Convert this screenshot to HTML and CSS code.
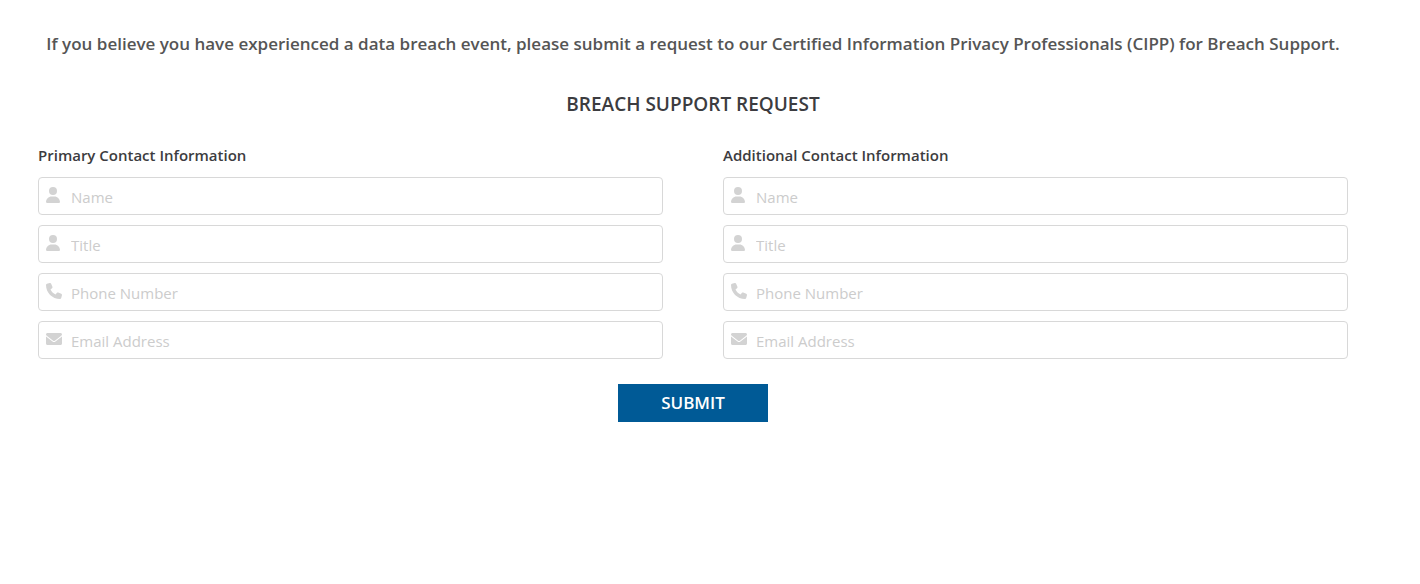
FILE: index.html
```
<!DOCTYPE html>
<html lang="en">
<head>
    <meta charset="UTF-8">
    <meta name="viewport" content="width=device-width, initial-scale=1.0">
    <title>Breach Support Request</title>
    <link rel="stylesheet" href="styles.css">
</head>
<body>

<svg class="icon-sprite" aria-hidden="true">
    <symbol id="icon-user" viewBox="0 0 448 512">
        <path d="M224 256A128 128 0 1 0 224 0a128 128 0 1 0 0 256zm-45.7 48C79.8 304 0 383.8 0 482.3C0 498.7 13.3 512 29.7 512H418.3c16.4 0 29.7-13.3 29.7-29.7C448 383.8 368.2 304 269.7 304H178.3z"/>
    </symbol>
    <symbol id="icon-phone" viewBox="0 0 512 512">
        <path d="M164.9 24.6c-7.7-18.6-28-28.5-47.4-23.2l-88 24C12.1 30.2 0 46 0 64C0 311.4 200.6 512 448 512c18 0 33.8-12.1 38.6-29.5l24-88c5.3-19.4-4.6-39.7-23.2-47.4l-96-40c-16.3-6.8-35.2-2.1-46.3 11.6L304.7 368C234.3 334.7 177.3 277.7 144 207.3L193.3 167c13.7-11.2 18.4-30 11.6-46.3l-40-96z"/>
    </symbol>
    <symbol id="icon-envelope" viewBox="0 0 512 512">
        <path d="M256 352c-16.53 0-33.06-5.422-47.16-16.41L0 173.2V400C0 426.5 21.49 448 48 448h416c26.51 0 48-21.49 48-48V173.2l-208.8 162.5C289.1 346.6 272.5 352 256 352zM16.29 145.3l212.2 165.1c16.19 12.6 38.87 12.6 55.06 0l212.2-165.1C505.1 137.3 512 125 512 112C512 85.49 490.5 64 464 64h-416C21.49 64 0 85.49 0 112C0 125 6.01 137.3 16.29 145.3z"/>
    </symbol>
</svg>

<main class="breach-support">
    <p class="intro">If you believe you have experienced a data breach event, please submit a request to our Certified Information Privacy Professionals (CIPP) for Breach Support.</p>

    <h1 class="form-title">BREACH SUPPORT REQUEST</h1>

    <form class="request-form">
        <div class="contact-columns">
            <section class="contact">
                <h2 class="contact-title">Primary Contact Information</h2>
                <label class="field">
                    <svg class="icon icon-user" aria-hidden="true"><use href="#icon-user"/></svg>
                    <input type="text" name="primary_name" placeholder="Name" aria-label="Name">
                </label>
                <label class="field">
                    <svg class="icon icon-user" aria-hidden="true"><use href="#icon-user"/></svg>
                    <input type="text" name="primary_title" placeholder="Title" aria-label="Title">
                </label>
                <label class="field">
                    <svg class="icon" aria-hidden="true"><use href="#icon-phone"/></svg>
                    <input type="tel" name="primary_phone" placeholder="Phone Number" aria-label="Phone Number">
                </label>
                <label class="field">
                    <svg class="icon" aria-hidden="true"><use href="#icon-envelope"/></svg>
                    <input type="email" name="primary_email" placeholder="Email Address" aria-label="Email Address">
                </label>
            </section>

            <section class="contact">
                <h2 class="contact-title">Additional Contact Information</h2>
                <label class="field">
                    <svg class="icon icon-user" aria-hidden="true"><use href="#icon-user"/></svg>
                    <input type="text" name="additional_name" placeholder="Name" aria-label="Name">
                </label>
                <label class="field">
                    <svg class="icon icon-user" aria-hidden="true"><use href="#icon-user"/></svg>
                    <input type="text" name="additional_title" placeholder="Title" aria-label="Title">
                </label>
                <label class="field">
                    <svg class="icon" aria-hidden="true"><use href="#icon-phone"/></svg>
                    <input type="tel" name="additional_phone" placeholder="Phone Number" aria-label="Phone Number">
                </label>
                <label class="field">
                    <svg class="icon" aria-hidden="true"><use href="#icon-envelope"/></svg>
                    <input type="email" name="additional_email" placeholder="Email Address" aria-label="Email Address">
                </label>
            </section>
        </div>

        <button class="submit-button" type="submit">SUBMIT</button>
    </form>
</main>

</body>
</html>
```
FILE: styles.css
```
* {
    box-sizing: border-box;
}

body {
    margin: 0;
    background-color: #fff;
    color: #3c3c40;
    font-family: "Segoe UI", "Open Sans", "Noto Sans", sans-serif;
}

.icon-sprite {
    display: none;
}

.breach-support {
    padding: 32px 72px 32px 38px;
}

.intro {
    margin: 0;
    color: #555;
    font-size: 17px;
    font-weight: 600;
    line-height: 24px;
    text-align: center;
}

.form-title {
    margin: 36px 0 0;
    font-size: 19px;
    font-weight: 600;
    line-height: 24px;
    text-align: center;
}

.request-form {
    display: flex;
    flex-direction: column;
    align-items: center;
    gap: 25px;
    margin-top: 27px;
}

.contact-columns {
    display: grid;
    grid-template-columns: 1fr 1fr;
    gap: 60px;
    width: 100%;
}

.contact {
    display: flex;
    flex-direction: column;
    gap: 10px;
}

.contact-title {
    margin: 0;
    font-size: 15px;
    font-weight: 600;
    line-height: 24px;
}

.field {
    display: flex;
    align-items: flex-start;
    gap: 9px;
    height: 38px;
    padding: 0 8px 0 7px;
    border: 1px solid #d8d8d8;
    border-radius: 4px;
}

.icon {
    flex: none;
    width: 16px;
    height: 16px;
    margin-top: 9px;
    fill: #d3d3d3;
}

.icon-user {
    width: 14px;
    margin-right: 2px;
}

.field input {
    flex: 1;
    min-width: 0;
    height: 100%;
    padding: 2px 0 0;
    border: none;
    outline: none;
    background-color: transparent;
    color: #3c3c40;
    font-family: inherit;
    font-size: 15px;
}

.field input::placeholder {
    color: #ccc;
    opacity: 1;
}

.field:focus-within {
    border-color: #005a96;
}

.submit-button {
    width: 150px;
    height: 38px;
    padding: 0 0 2px;
    border: none;
    background-color: #005a96;
    color: #fff;
    font-family: inherit;
    font-size: 17px;
    font-weight: 600;
    cursor: pointer;
}
```
